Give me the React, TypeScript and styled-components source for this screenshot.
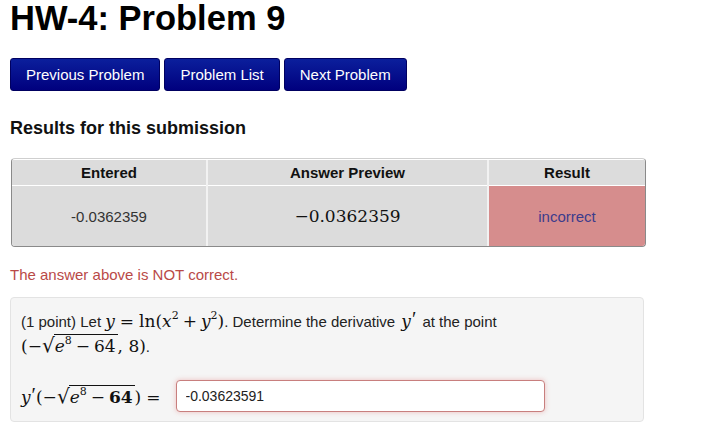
import React from 'react';
import styled, { createGlobalStyle } from 'styled-components';

const GlobalStyle = createGlobalStyle`
    body {
        margin: 0;
        background: #ffffff;
        font-family: "Liberation Sans", Arial, sans-serif;
        color: #333333;
    }
`;

const Page = styled.div`
    width: 635px;
    padding: 0 10px;
`;

const Title = styled.h1`
    margin: 0;
    font-size: 34.5px;
    line-height: 37px;
    font-weight: bold;
    color: #000000;
`;

const NavRow = styled.div`
    display: flex;
    gap: 4px;
    margin-top: 21px;
`;

const NavButton = styled.button`
    height: 33px;
    padding: 0 15px;
    border: 1px solid #000060;
    border-radius: 3px;
    background: linear-gradient(#0b1f9c, #00007e);
    color: #ffffff;
    font-family: "Liberation Sans", Arial, sans-serif;
    font-size: 15px;
`;

const SectionHeading = styled.h2`
    margin: 27px 0 0;
    font-size: 18px;
    line-height: 20px;
    font-weight: bold;
    color: #111111;
`;

const ResultsWrap = styled.div`
    margin-top: 20px;
    width: 633px;
    margin-left: 1px;
    border: 1px solid #8a8a8a;
    border-top-color: #cfcfcf;
    border-radius: 4px;
    overflow: hidden;
    padding: 1px 0 0;
    background: #ffffff;
`;

const ResultsTable = styled.table`
    width: 100%;
    border-collapse: collapse;
    table-layout: fixed;
`;

const HeadCell = styled.th`
    height: 25px;
    padding: 0;
    background: #dcdcdc;
    font-size: 15px;
    font-weight: bold;
    color: #111111;
    text-align: center;
    border-bottom: 1px solid #ffffff;
    border-left: ${props => (props.$first ? 'none' : '1px solid #8a8a8a')};
    border-right: ${props => (props.$last ? 'none' : '2px solid #f2f2f2')};
`;

const BodyCell = styled.td`
    height: 60px;
    padding: 0;
    background: ${props => (props.$bad ? '#d68d8d' : '#dcdcdc')};
    font-size: ${props => (props.$math ? '17px' : '15px')};
    font-family: ${props => (props.$math ? '"DejaVu Serif", "Liberation Serif", serif' : '"Liberation Sans", Arial, sans-serif')};
    color: ${props => (props.$bad ? '#3c3c8c' : props.$math ? '#111111' : '#333333')};
    text-align: center;
    border-top: 1px solid #8a8a8a;
    border-left: ${props => (props.$first ? 'none' : '1px solid #8a8a8a')};
    border-right: ${props => (props.$last ? 'none' : '2px solid #f2f2f2')};
`;

const Warning = styled.div`
    margin-top: 19px;
    font-size: 15px;
    line-height: 18px;
    color: #b94a48;
`;

const ProblemBox = styled.div`
    margin-top: 13px;
    width: 612px;
    padding: 10px 10px 9px;
    background: #f5f5f5;
    border: 1px solid #e3e3e3;
    border-radius: 4px;
    font-size: 15px;
    line-height: 24px;
    color: #222222;
`;

const Line = styled.div`
    display: flex;
    align-items: baseline;
    flex-wrap: wrap;
`;

const Math = styled.span`
    font-family: "DejaVu Serif", "Liberation Serif", serif;
    font-size: 17px;
    color: #111111;
    white-space: nowrap;
    margin: 0 ${props => props.$gap || 0}px;
`;

const Var = styled.i`
    font-style: italic;
`;

const Prime = styled.span`
    font-family: "Liberation Serif", serif;
    font-style: normal;
    font-size: 20px;
    margin-left: 1px;
    position: relative;
    top: -1px;
`;

const Op = styled.span`
    margin: 0 ${props => props.$gap ?? 4}px;
`;

const Sup = styled.sup`
    font-size: 11px;
    vertical-align: 8px;
    line-height: 0;
`;

const Root = styled.span`
    display: inline-flex;
    align-items: flex-end;
`;

const RootSign = styled.span`
    font-size: 20px;
    line-height: 1;
    margin-right: -1px;
`;

const Radicand = styled.span`
    border-top: 1px solid #111111;
    padding: 2px 2px 0 1px;
    line-height: 18px;
`;

const Bold = styled.b`
    font-weight: 600;
`;

const AnswerRow = styled.div`
    margin-top: 21px;
    display: flex;
    align-items: center;
    gap: 10px;
`;

const AnswerInput = styled.input`
    width: 349px;
    height: 30px;
    padding: 0 9px;
    border: 1px solid #c87f7e;
    border-radius: 4px;
    box-shadow: 0 0 5px rgba(226, 120, 120, 0.45);
    background: #ffffff;
    font-family: "Liberation Sans", Arial, sans-serif;
    font-size: 14px;
    color: #222222;
    outline: none;
`;

const columns = [
    { label: 'Entered', width: 195 },
    { label: 'Answer Preview', width: 281 },
    { label: 'Result', width: 157 },
];

const SqrtE8 = ({ bold }: { bold?: boolean }) => (
    <Root>
        <RootSign>√</RootSign>
        <Radicand>
            <Var>e</Var><Sup>8</Sup><Op>−</Op>{bold ? <Bold>64</Bold> : '64'}
        </Radicand>
    </Root>
);

const App: React.FC = () => {
    return (
        <Page>
            <GlobalStyle />
            <Title>HW-4: Problem 9</Title>
            <NavRow>
                <NavButton>Previous Problem</NavButton>
                <NavButton>Problem List</NavButton>
                <NavButton>Next Problem</NavButton>
            </NavRow>

            <SectionHeading>Results for this submission</SectionHeading>
            <ResultsWrap>
                <ResultsTable>
                    <colgroup>
                        {columns.map(c => <col key={c.label} style={{ width: c.width }} />)}
                    </colgroup>
                    <thead>
                        <tr>
                            {columns.map((c, i) => (
                                <HeadCell key={c.label} $first={i === 0} $last={i === columns.length - 1}>
                                    {c.label}
                                </HeadCell>
                            ))}
                        </tr>
                    </thead>
                    <tbody>
                        <tr>
                            <BodyCell $first>-0.0362359</BodyCell>
                            <BodyCell $math>−0.0362359</BodyCell>
                            <BodyCell $last $bad>incorrect</BodyCell>
                        </tr>
                    </tbody>
                </ResultsTable>
            </ResultsWrap>

            <Warning>The answer above is NOT correct.</Warning>

            <ProblemBox>
                <Line>
                    (1 point) Let&nbsp;
                    <Math>
                        <Var>y</Var><Op $gap={5}>=</Op>ln(<Var>x</Var><Sup>2</Sup><Op>+</Op><Var>y</Var><Sup>2</Sup>)
                    </Math>
                    . Determine the derivative&nbsp;
                    <Math $gap={2}><Var>y</Var><Prime>′</Prime></Math>
                    &nbsp;at the point
                </Line>
                <Line>
                    <Math>
                        (−<SqrtE8 />, 8)
                    </Math>
                    .
                </Line>
                <AnswerRow>
                    <Math>
                        <Var>y</Var><Prime>′</Prime>(−<SqrtE8 bold />)<Op $gap={5}>=</Op>
                    </Math>
                    <AnswerInput defaultValue="-0.03623591" />
                </AnswerRow>
            </ProblemBox>
        </Page>
    );
};

export default App;
